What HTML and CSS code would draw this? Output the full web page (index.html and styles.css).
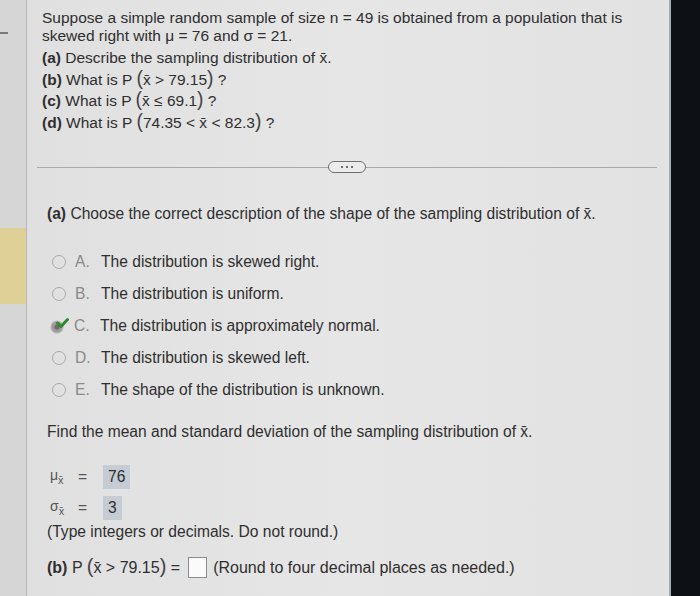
FILE: index.html
```html
<!DOCTYPE html>
<html>
<head>
<meta charset="utf-8">
<link rel="stylesheet" href="styles.css">
</head>
<body>
<div class="screen">
  <div class="gutter">
    <div class="dash"></div>
    <div class="marker"></div>
  </div>
  <div class="page">
    <div class="question">
      <p class="intro">Suppose a simple random sample of size n = 49 is obtained from a population that is skewed right with μ = 76 and σ = 21.</p>
      <p class="part"><b>(a)</b> Describe the sampling distribution of <span class="xb">x̄</span>.</p>
      <p class="part"><b>(b)</b> What is P <span class="par">(</span><span class="xb">x̄</span> &gt; 79.15<span class="par">)</span> ?</p>
      <p class="part"><b>(c)</b> What is P <span class="par">(</span><span class="xb">x̄</span> ≤ 69.1<span class="par">)</span> ?</p>
      <p class="part"><b>(d)</b> What is P <span class="par">(</span>74.35 &lt; <span class="xb">x̄</span> &lt; 82.3<span class="par">)</span> ?</p>
    </div>
    <div class="divider">
      <div class="rule"></div>
      <div class="more"><i></i><i></i><i></i></div>
      <div class="rule"></div>
    </div>
    <div class="answer">
      <p class="prompt"><b>(a)</b> Choose the correct description of the shape of the sampling distribution of <span class="xb">x̄</span>.</p>
      <ul class="options">
        <li><span class="radio"></span><span class="letter">A.</span><span>The distribution is skewed right.</span></li>
        <li><span class="radio"></span><span class="letter">B.</span><span>The distribution is uniform.</span></li>
        <li><span class="radio-check"><svg width="24" height="18" viewBox="0 0 24 18"><circle cx="7" cy="10" r="6" fill="#9a9a9a" stroke="#b8b8b8" stroke-width="1.2"/><circle cx="7" cy="10" r="2.5" fill="#6c6c6c"/><path d="M7.5 6 L11 9.5 L17.5 2.5" fill="none" stroke="#2e8b2e" stroke-width="3" stroke-linecap="round" stroke-linejoin="round"/></svg></span><span class="letter">C.</span><span>The distribution is approximately normal.</span></li>
        <li><span class="radio"></span><span class="letter">D.</span><span>The distribution is skewed left.</span></li>
        <li><span class="radio"></span><span class="letter">E.</span><span>The shape of the distribution is unknown.</span></li>
      </ul>
      <p class="prompt find">Find the mean and standard deviation of the sampling distribution of <span class="xb">x̄</span>.</p>
      <div class="stat first"><span class="sym">μ<sub>x̄</sub></span><span class="eq">=</span><span class="val">76</span></div>
      <div class="stat"><span class="sym">σ<sub>x̄</sub></span><span class="eq">=</span><span class="val">3</span></div>
      <p class="note">(Type integers or decimals. Do not round.)</p>
      <p class="partb"><b>(b)</b> P <span class="par">(</span><span class="xb">x̄</span> &gt; 79.15<span class="par">)</span> =<span class="box"></span>(Round to four decimal places as needed.)</p>
    </div>
  </div>
  <div class="bezel"></div>
</div>
</body>
</html>
```

FILE: styles.css
```css
html, body {
  margin: 0;
  padding: 0;
}
body {
  width: 700px;
  height: 596px;
  overflow: hidden;
  background: #e2e2e2;
  font-family: "Liberation Sans", Arial, sans-serif;
  color: #2f2f2f;
}
.screen {
  display: flex;
  height: 596px;
}
.gutter {
  width: 26px;
  flex: none;
  background: #d6d6d6;
  border-right: 1px solid #b8b8b8;
  display: flex;
  flex-direction: column;
}
.dash {
  width: 8px;
  height: 2px;
  background: #7a7a7a;
  margin-top: 32px;
}
.marker {
  height: 76px;
  margin-top: 194px;
  background: #dfd196;
}
.page {
  flex: 1;
  background: linear-gradient(90deg, #e0e0e0, #e6e6e6 50%, #e2e2e2);
  padding-left: 15px;
  display: flex;
  flex-direction: column;
}
.bezel {
  width: 29px;
  flex: none;
  background: #0d1015;
  border-left: 2px solid #a4acb4;
}
p {
  margin: 0;
}
b {
  font-weight: bold;
}
.question {
  font-size: 15.5px;
  padding-top: 9px;
  padding-right: 20px;
}
.intro {
  line-height: 18px;
}
.part {
  line-height: 21.5px;
}
.intro + .part {
  margin-top: 2px;
}
.par {
  font-size: 1.25em;
  line-height: 0;
  font-weight: 300;
  color: #444;
}
.divider {
  display: flex;
  align-items: center;
  margin-top: 28px;
  margin-left: -5px;
  margin-right: 12px;
}
.rule {
  flex: 1;
  height: 1px;
  background: #a9a9a9;
}
.more {
  width: 36px;
  height: 10px;
  border: 1px solid #707070;
  border-radius: 6px;
  background: #ececec;
  display: flex;
  justify-content: center;
  align-items: center;
  gap: 3px;
}
.more i {
  width: 2px;
  height: 2px;
  background: #444;
  border-radius: 1px;
}
.answer {
  padding-left: 5px;
  font-size: 15.6px;
}
.prompt {
  line-height: 20px;
  margin-top: 31px;
}
.options {
  list-style: none;
  margin: 22px 0 0 4px;
  padding: 0;
}
.options li {
  display: flex;
  align-items: center;
  height: 32px;
}
.radio {
  width: 12px;
  height: 12px;
  border: 1.5px solid #a9a9a9;
  border-radius: 50%;
  margin-left: 1px;
  margin-right: 9px;
}
.radio-check {
  width: 24px;
  height: 18px;
  margin-left: -1px;
}
.radio-check svg {
  display: block;
}
.letter {
  color: #8a8a8a;
  width: 26px;
}
.find {
  margin-top: 16px;
}
.stat {
  display: flex;
  align-items: center;
  margin-left: 3px;
  height: 31px;
}
.stat.first {
  margin-top: 19px;
}
.sym {
  width: 28px;
  color: #555;
  font-size: 14px;
}
.sym sub {
  font-size: 11px;
}
.eq {
  width: 25px;
  color: #555;
}
.val {
  background: #c6ccd3;
  padding: 3px 5px;
  line-height: 18px;
}
.note {
  line-height: 20px;
  margin-top: -1px;
}
.partb {
  font-size: 16px;
  line-height: 22px;
  margin-top: 15px;
}
.box {
  display: inline-block;
  width: 17px;
  height: 19px;
  margin: 0 6px 0 8px;
  background: #fafafa;
  border: 1px solid #8c8c8c;
  vertical-align: -5px;
}
```
